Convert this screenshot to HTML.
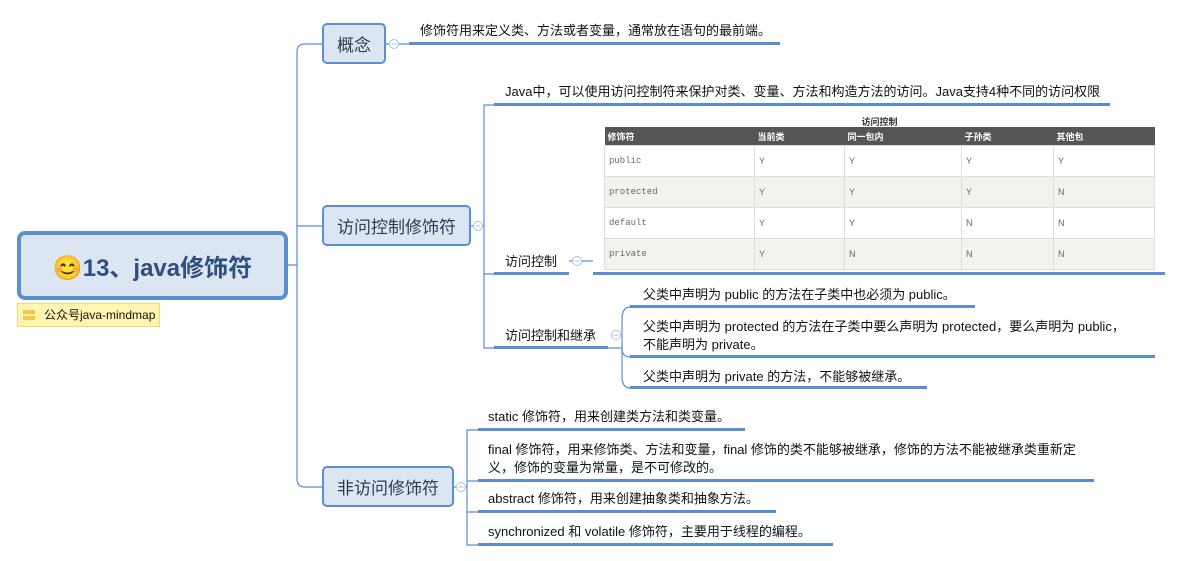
<!DOCTYPE html>
<html><head><meta charset="utf-8"><style>
body{margin:0;width:1182px;height:561px;background:#fff;position:relative;overflow:hidden;font-family:"Liberation Sans","Noto Sans CJK SC",sans-serif;color:#111}
.a{position:absolute;white-space:nowrap}
.box{position:absolute;background:#dce6f2;border:2px solid #5b8fd4;border-radius:5px;box-sizing:border-box;display:flex;align-items:center;justify-content:center;font-size:17px;color:#2b3a55}
.t{position:absolute;font-size:13px;white-space:nowrap;line-height:18px}
.ul{position:absolute;height:3px;background:#5a8ed3}
table{border-collapse:collapse;font-size:9px;color:#666}
td{border:1px solid #ddd;height:30px;padding:0 4px}
th{background:#555;color:#fff;text-align:left;font-size:9px;height:18px;padding:0 3px}
</style></head><body>
<svg class="a" style="left:0;top:0" width="1182" height="561">
<g fill="none" stroke="#5a8ed3" stroke-width="1.2">
<path d="M288 265H297M322 44H305Q297 44 297 52V479Q297 487 305 487H322M297 226Q297 226 305 226H322"/>
<path d="M386 44H409M471 226H484M494 105H484V348H494M484 274H494"/>
<path d="M569 261H593M608 348H622M630 307Q622 307 622 320V376Q622 388 630 388M622 348Q622 357 630 357"/>
<path d="M454 487H467M478 430H467V545H478M467 481H478M467 512H478"/>
</g>
<g fill="#fff" stroke="#a9bfe3" stroke-width="1">
<circle cx="394" cy="44" r="4.5"/><circle cx="478" cy="226" r="4.5"/><circle cx="577" cy="261" r="4.5"/><circle cx="616" cy="335" r="4.5"/><circle cx="461" cy="487" r="4.5"/>
</g>
<g stroke="#a9bfe3"><path d="M391.5 44h5M475.5 226h5M574.5 261h5M613.5 335h5M458.5 487h5"/></g>
</svg>
<div class="box" style="left:17px;top:231px;width:271px;height:69px;border-width:4px;border-radius:8px;font-size:24px;font-weight:bold;color:#2f4f7f">😊13、java修饰符</div>
<div class="a" style="left:17px;top:303px;width:143px;height:24px;background:#fff5b0;border:1px solid #f2d878;box-sizing:border-box;font-size:12px;line-height:22px;padding-left:26px">公众号java-mindmap</div>
<div class="a" style="left:23px;top:310px;width:12px;height:4px;background:#f5c64a"></div>
<div class="a" style="left:23px;top:316px;width:12px;height:4px;background:#f5c64a"></div>
<div class="box" style="left:322px;top:23px;width:64px;height:41px">概念</div>
<div class="box" style="left:322px;top:205px;width:149px;height:41px">访问控制修饰符</div>
<div class="box" style="left:322px;top:466px;width:132px;height:41px">非访问修饰符</div>
<div class="t" style="left:420px;top:22px">修饰符用来定义类、方法或者变量，通常放在语句的最前端。</div>
<div class="ul" style="left:409px;top:42px;width:371px"></div>
<div class="t" style="left:505px;top:83px">Java中，可以使用访问控制符来保护对类、变量、方法和构造方法的访问。Java支持4种不同的访问权限</div>
<div class="ul" style="left:494px;top:103px;width:616px"></div>
<div class="t" style="left:505px;top:253px">访问控制</div>
<div class="ul" style="left:494px;top:272px;width:75px"></div>
<div class="ul" style="left:593px;top:272px;width:572px"></div>
<div class="a" style="left:604px;top:115px;width:551px;text-align:center;font-size:9px;font-weight:bold;color:#333">访问控制</div>
<table class="a" style="left:604px;top:127px;width:551px">
<tr><th style="width:144px">修饰符</th><th style="width:84px">当前类</th><th style="width:111px">同一包内</th><th style="width:86px">子孙类</th><th>其他包</th></tr>
<tr><td style="font-family:'Liberation Mono',monospace">public</td><td>Y</td><td>Y</td><td>Y</td><td>Y</td></tr>
<tr style="background:#f3f2ee"><td style="font-family:'Liberation Mono',monospace">protected</td><td>Y</td><td>Y</td><td>Y</td><td>N</td></tr>
<tr><td style="font-family:'Liberation Mono',monospace">default</td><td>Y</td><td>Y</td><td>N</td><td>N</td></tr>
<tr style="background:#f3f2ee"><td style="font-family:'Liberation Mono',monospace">private</td><td>Y</td><td>N</td><td>N</td><td>N</td></tr>
</table>
<div class="t" style="left:505px;top:327px">访问控制和继承</div>
<div class="ul" style="left:494px;top:346px;width:114px"></div>
<div class="t" style="left:643px;top:286px">父类中声明为 public 的方法在子类中也必须为 public。</div>
<div class="ul" style="left:630px;top:305px;width:345px"></div>
<div class="t" style="left:643px;top:318px">父类中声明为 protected 的方法在子类中要么声明为 protected，要么声明为 public，</div>
<div class="t" style="left:643px;top:336px">不能声明为 private。</div>
<div class="ul" style="left:630px;top:355px;width:525px"></div>
<div class="t" style="left:643px;top:368px">父类中声明为 private 的方法，不能够被继承。</div>
<div class="ul" style="left:630px;top:386px;width:297px"></div>
<div class="t" style="left:488px;top:408px">static 修饰符，用来创建类方法和类变量。</div>
<div class="ul" style="left:478px;top:428px;width:267px"></div>
<div class="t" style="left:488px;top:441px">final 修饰符，用来修饰类、方法和变量，final 修饰的类不能够被继承，修饰的方法不能被继承类重新定</div>
<div class="t" style="left:488px;top:459px">义，修饰的变量为常量，是不可修改的。</div>
<div class="ul" style="left:478px;top:479px;width:616px"></div>
<div class="t" style="left:488px;top:490px">abstract 修饰符，用来创建抽象类和抽象方法。</div>
<div class="ul" style="left:478px;top:510px;width:298px"></div>
<div class="t" style="left:488px;top:523px">synchronized 和 volatile 修饰符，主要用于线程的编程。</div>
<div class="ul" style="left:478px;top:543px;width:355px"></div>
</body></html>
